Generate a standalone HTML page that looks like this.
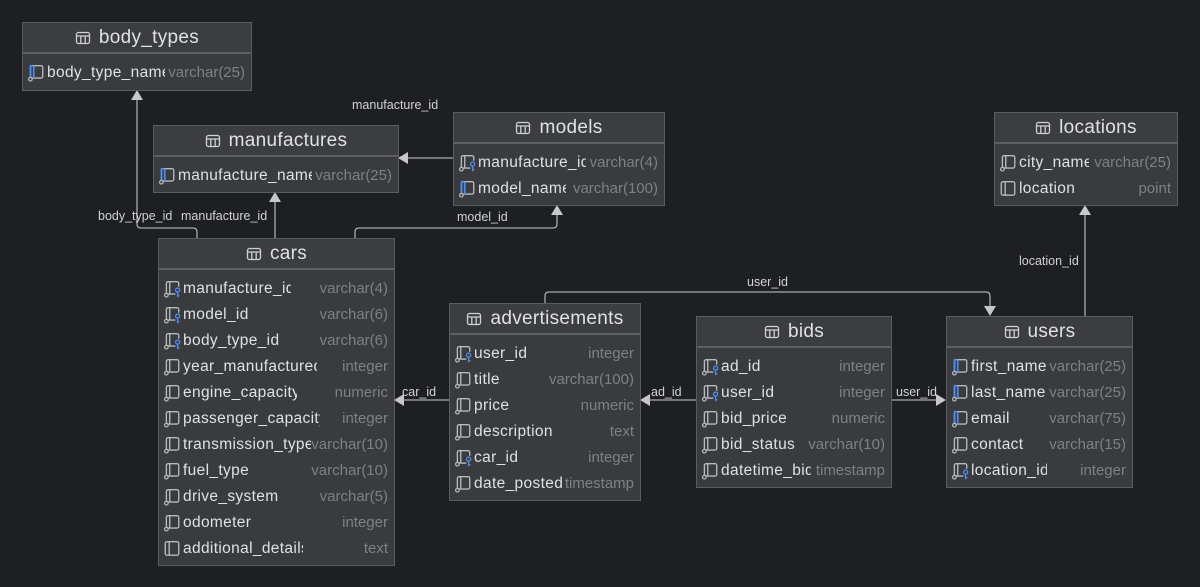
<!DOCTYPE html>
<html><head><meta charset="utf-8"><style>
body{margin:0;width:1200px;height:587px;background:#1e1f22;overflow:hidden;position:relative;font-family:"Liberation Sans","DejaVu Sans",sans-serif}
.t{position:absolute;background:#393b3e;border:1px solid #5a5c60;box-sizing:border-box}
.h{height:31px;background:#3c3d40;border-bottom:2px solid #5d5f63;color:#dfe1e5;font-size:19px;letter-spacing:0.3px;display:flex;align-items:center;justify-content:center;box-sizing:border-box}
.h svg{margin-right:8px}
.r{position:relative;height:26px;color:#dfe1e5;font-size:15.5px;letter-spacing:0.35px;line-height:26px}
.r svg{position:absolute;left:4px;top:4px}
.n{position:absolute;left:24px;white-space:nowrap;overflow:hidden}
.y{position:absolute;right:6px;color:#7e8085;letter-spacing:0;font-size:15px}
.b{padding-top:6px}
.l{position:absolute;color:#d0d2d6;font-size:12.5px}
</style></head><body>
<svg width="0" height="0" style="position:absolute">
<defs>
<symbol id="tb" viewBox="0 0 16 16"><rect x="1.5" y="2.5" width="13" height="11" rx="2" fill="none" stroke="#cfd1d5" stroke-width="1.3"/><path d="M1.5 6h13M5.8 6v7.5M10.2 6v7.5" stroke="#cfd1d5" stroke-width="1.3"/></symbol>
<symbol id="c" viewBox="0 0 16 16"><rect x="3" y="1.5" width="11" height="11" rx="1.5" fill="none" stroke="#b8babe" stroke-width="1.2"/><path d="M6 1.5v11" stroke="#b8babe" stroke-width="1.2"/><circle cx="3" cy="13.5" r="1.6" fill="#393b3e" stroke="#b8babe" stroke-width="1.1"/></symbol>
<symbol id="u" viewBox="0 0 16 16"><rect x="3" y="1.5" width="11" height="11" rx="1.5" fill="none" stroke="#b8babe" stroke-width="1.2"/><path d="M5 1.5H3.2v11M6 1.5v11" stroke="#4e8cf0" stroke-width="1.5" fill="none"/><circle cx="3" cy="13.5" r="1.6" fill="#393b3e" stroke="#b8babe" stroke-width="1.1"/></symbol>
<symbol id="k" viewBox="0 0 16 16"><path d="M11 12.5H4.5a1.5 1.5 0 0 1-1.5-1.5V3a1.5 1.5 0 0 1 1.5-1.5H12.5A1.5 1.5 0 0 1 14 3v3" fill="none" stroke="#b8babe" stroke-width="1.2"/><path d="M6 1.5v11" stroke="#b8babe" stroke-width="1.2"/><circle cx="3" cy="13.5" r="1.6" fill="#393b3e" stroke="#b8babe" stroke-width="1.1"/><circle cx="13" cy="9" r="1.8" fill="none" stroke="#4e8cf0" stroke-width="1.2"/><path d="M13 10.8v4.5M13 14h1.6" stroke="#4e8cf0" stroke-width="1.2"/></symbol>
<symbol id="p" viewBox="0 0 16 16"><rect x="2" y="1.5" width="12" height="12" rx="1.5" fill="none" stroke="#b8babe" stroke-width="1.2"/><path d="M5.5 1.5v12" stroke="#b8babe" stroke-width="1.2"/></symbol>
</defs></svg>

<svg width="1200" height="587" style="position:absolute;left:0;top:0" fill="none" stroke="#a9abaf" stroke-width="1.3">
<path d="M137 96V224q0 4 4 4H193q4 0 4 4v6"/>
<path d="M275 238V198"/>
<path d="M355 238v-6q0-4 4-4H553q4 0 4-4v-13"/>
<path d="M453 158H405"/>
<path d="M449 400H401"/>
<path d="M696 400H647"/>
<path d="M891 400H939"/>
<path d="M545 303v-7q0-4 4-4H986q4 0 4 4v14"/>
<path d="M1085 316V212"/>
<g fill="#c5c7cb" stroke="none">
<path d="M137 90l-6 10h12z"/>
<path d="M275 192l-6 10h12z"/>
<path d="M557 205l-6 10h12z"/>
<path d="M398 158l10-6v12z"/>
<path d="M394 400l10-6v12z"/>
<path d="M640 400l10-6v12z"/>
<path d="M946 400l-10-6v12z"/>
<path d="M990 316l-6-10h12z"/>
<path d="M1085 205l-6 10h12z"/>
</g></svg>

<div class="l" style="left:352px;top:98px">manufacture_id</div>
<div class="l" style="left:98px;top:209px">body_type_id</div>
<div class="l" style="left:181px;top:209px">manufacture_id</div>
<div class="l" style="left:457px;top:210px">model_id</div>
<div class="l" style="left:747px;top:275px">user_id</div>
<div class="l" style="left:1019px;top:254px">location_id</div>
<div class="l" style="left:402px;top:385px">car_id</div>
<div class="l" style="left:651px;top:385px">ad_id</div>
<div class="l" style="left:896px;top:385px">user_id</div>

<div class="t" style="left:22px;top:22px;width:230px;height:69px">
<div class="h"><svg width="16" height="16"><use href="#tb"/></svg>body_types</div>
<div class="b"><div class="r"><svg width="18" height="18"><use href="#u"/></svg><span class="n" style="width:118px">body_type_name</span><span class="y">varchar(25)</span></div></div></div>

<div class="t" style="left:153px;top:125px;width:246px;height:68px">
<div class="h"><svg width="16" height="16"><use href="#tb"/></svg>manufactures</div>
<div class="b"><div class="r"><svg width="18" height="18"><use href="#u"/></svg><span class="n" style="width:134px">manufacture_name</span><span class="y">varchar(25)</span></div></div></div>

<div class="t" style="left:453px;top:112px;width:212px;height:94px">
<div class="h"><svg width="16" height="16"><use href="#tb"/></svg>models</div>
<div class="b">
<div class="r"><svg width="18" height="18"><use href="#k"/></svg><span class="n" style="width:108px">manufacture_id</span><span class="y">varchar(4)</span></div>
<div class="r"><svg width="18" height="18"><use href="#u"/></svg><span class="n" style="width:88px">model_name</span><span class="y">varchar(100)</span></div></div></div>

<div class="t" style="left:994px;top:112px;width:184px;height:94px">
<div class="h"><svg width="16" height="16"><use href="#tb"/></svg>locations</div>
<div class="b">
<div class="r"><svg width="18" height="18"><use href="#c"/></svg><span class="n" style="width:70px">city_name</span><span class="y">varchar(25)</span></div>
<div class="r"><svg width="18" height="18"><use href="#p"/></svg><span class="n">location</span><span class="y">point</span></div></div></div>

<div class="t" style="left:158px;top:238px;width:237px;height:328px">
<div class="h"><svg width="16" height="16"><use href="#tb"/></svg>cars</div>
<div class="b">
<div class="r"><svg width="18" height="18"><use href="#k"/></svg><span class="n" style="width:108px">manufacture_id</span><span class="y">varchar(4)</span></div>
<div class="r"><svg width="18" height="18"><use href="#k"/></svg><span class="n" style="width:108px">model_id</span><span class="y">varchar(6)</span></div>
<div class="r"><svg width="18" height="18"><use href="#k"/></svg><span class="n" style="width:108px">body_type_id</span><span class="y">varchar(6)</span></div>
<div class="r"><svg width="18" height="18"><use href="#c"/></svg><span class="n" style="width:134px">year_manufactured</span><span class="y">integer</span></div>
<div class="r"><svg width="18" height="18"><use href="#c"/></svg><span class="n" style="width:114px">engine_capacity</span><span class="y">numeric</span></div>
<div class="r"><svg width="18" height="18"><use href="#c"/></svg><span class="n" style="width:137px">passenger_capacity</span><span class="y">integer</span></div>
<div class="r"><svg width="18" height="18"><use href="#c"/></svg><span class="n" style="width:128px">transmission_type</span><span class="y">varchar(10)</span></div>
<div class="r"><svg width="18" height="18"><use href="#c"/></svg><span class="n">fuel_type</span><span class="y">varchar(10)</span></div>
<div class="r"><svg width="18" height="18"><use href="#c"/></svg><span class="n">drive_system</span><span class="y">varchar(5)</span></div>
<div class="r"><svg width="18" height="18"><use href="#c"/></svg><span class="n">odometer</span><span class="y">integer</span></div>
<div class="r"><svg width="18" height="18"><use href="#p"/></svg><span class="n" style="width:120px">additional_details</span><span class="y">text</span></div>
</div></div>

<div class="t" style="left:449px;top:303px;width:192px;height:198px">
<div class="h"><svg width="16" height="16"><use href="#tb"/></svg>advertisements</div>
<div class="b">
<div class="r"><svg width="18" height="18"><use href="#k"/></svg><span class="n">user_id</span><span class="y">integer</span></div>
<div class="r"><svg width="18" height="18"><use href="#c"/></svg><span class="n">title</span><span class="y">varchar(100)</span></div>
<div class="r"><svg width="18" height="18"><use href="#c"/></svg><span class="n">price</span><span class="y">numeric</span></div>
<div class="r"><svg width="18" height="18"><use href="#c"/></svg><span class="n">description</span><span class="y">text</span></div>
<div class="r"><svg width="18" height="18"><use href="#k"/></svg><span class="n">car_id</span><span class="y">integer</span></div>
<div class="r"><svg width="18" height="18"><use href="#c"/></svg><span class="n" style="width:88px">date_posted</span><span class="y">timestamp</span></div>
</div></div>

<div class="t" style="left:696px;top:316px;width:196px;height:172px">
<div class="h"><svg width="16" height="16"><use href="#tb"/></svg>bids</div>
<div class="b">
<div class="r"><svg width="18" height="18"><use href="#k"/></svg><span class="n">ad_id</span><span class="y">integer</span></div>
<div class="r"><svg width="18" height="18"><use href="#k"/></svg><span class="n">user_id</span><span class="y">integer</span></div>
<div class="r"><svg width="18" height="18"><use href="#c"/></svg><span class="n">bid_price</span><span class="y">numeric</span></div>
<div class="r"><svg width="18" height="18"><use href="#c"/></svg><span class="n">bid_status</span><span class="y">varchar(10)</span></div>
<div class="r"><svg width="18" height="18"><use href="#c"/></svg><span class="n" style="width:90px">datetime_bid</span><span class="y">timestamp</span></div>
</div></div>

<div class="t" style="left:946px;top:316px;width:187px;height:172px">
<div class="h"><svg width="16" height="16"><use href="#tb"/></svg>users</div>
<div class="b">
<div class="r"><svg width="18" height="18"><use href="#u"/></svg><span class="n" style="width:76px">first_name</span><span class="y">varchar(25)</span></div>
<div class="r"><svg width="18" height="18"><use href="#u"/></svg><span class="n" style="width:76px">last_name</span><span class="y">varchar(25)</span></div>
<div class="r"><svg width="18" height="18"><use href="#u"/></svg><span class="n">email</span><span class="y">varchar(75)</span></div>
<div class="r"><svg width="18" height="18"><use href="#c"/></svg><span class="n">contact</span><span class="y">varchar(15)</span></div>
<div class="r"><svg width="18" height="18"><use href="#k"/></svg><span class="n" style="width:76px">location_id</span><span class="y">integer</span></div>
</div></div>
</body></html>
